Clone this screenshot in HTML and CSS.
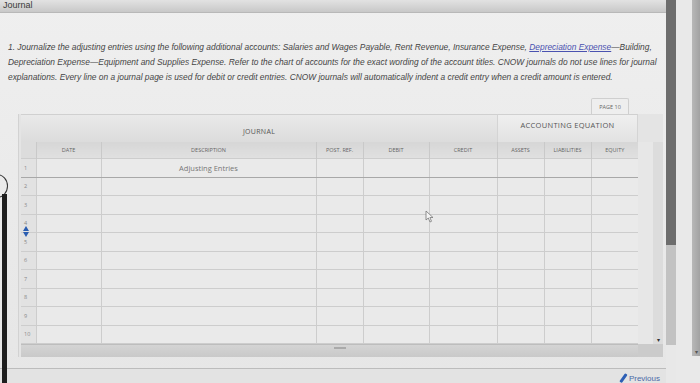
FILE: index.html
```html
<!DOCTYPE html>
<html lang="en">
<head>
  <meta charset="UTF-8">
  <meta name="viewport" content="width=device-width, initial-scale=1.0">
  <title>Journal</title>
  <link rel="stylesheet" href="styles.css">
</head>
<body>

  <div class="main">
    <!-- Title bar -->
    <div class="topbar">Journal</div>

    <!-- Instructions -->
    <p class="instructions">
      1. Journalize the adjusting entries using the following additional accounts: Salaries and Wages Payable, Rent Revenue, Insurance Expense, <a href="#">Depreciation Expense</a>—Building,<br>
      Depreciation Expense—Equipment and Supplies Expense. Refer to the chart of accounts for the exact wording of the account titles. CNOW journals do not use lines for journal<br>
      explanations. Every line on a journal page is used for debit or credit entries. CNOW journals will automatically indent a credit entry when a credit amount is entered.
    </p>

    <!-- Journal -->
    <div class="journal-area">
      <div class="page-tab">PAGE 10</div>
      <div class="journal-frame">
        <div class="journal-inner">
          <div class="title-row">
            <div class="title-journal">JOURNAL</div>
            <div class="title-equation">ACCOUNTING EQUATION</div>
          </div>
          <table class="journal">
            <colgroup>
              <col style="width:15px"><col style="width:65px"><col style="width:215px">
              <col style="width:47px"><col style="width:66px"><col style="width:68px">
              <col style="width:47px"><col style="width:47px"><col style="width:47px">
            </colgroup>
            <thead>
              <tr>
                <th class="num"></th>
                <th>DATE</th>
                <th>DESCRIPTION</th>
                <th>POST. REF.</th>
                <th>DEBIT</th>
                <th>CREDIT</th>
                <th>ASSETS</th>
                <th>LIABILITIES</th>
                <th>EQUITY</th>
              </tr>
            </thead>
            <tbody id="rows"></tbody>
          </table>
          <div class="hbar"><span class="hthumb"></span></div>
        </div>
        <div class="inner-scroll"><span class="arrow">▾</span></div>
      </div>

      <!-- overlays -->
      <div class="circle"></div>
      <div class="spinner">
        <span class="up"></span>
        <span class="down"></span>
      </div>
      <svg class="cursor" width="9" height="13" viewBox="0 0 9 13">
        <path d="M1 1 L1 10 L3.3 8 L5 12 L6.5 11.3 L4.9 7.5 L8 7.5 Z" fill="#f4f4f4" stroke="#777" stroke-width="0.8"/>
      </svg>
    </div>

    <!-- Footer -->
    <div class="footer">
      <a href="#" class="prev"><span class="pen"></span>Previous</a>
    </div>

    <div class="bezel"></div>
  </div>

  <div class="outer-scroll">
    <div class="outer-thumb"></div>
  </div>
  <div class="gutter">
    <div class="gutter-bar"><span class="arrow">▾</span></div>
  </div>

  <script>
    const body = document.getElementById("rows");
    for (let i = 1; i <= 10; i++) {
      let tr = document.createElement("tr");
      let html = '<td class="num">' + i + '</td><td></td>';
      html += '<td class="desc">' + (i === 1 ? "Adjusting Entries" : "") + '</td>';
      html += '<td></td><td></td><td></td><td></td><td></td><td></td>';
      tr.innerHTML = html;
      body.appendChild(tr);
    }
  </script>
</body>
</html>
```

FILE: styles.css
```css
html, body {
  margin: 0;
  padding: 0;
}

body {
  display: flex;
  width: 700px;
  height: 383px;
  overflow: hidden;
  background-color: #e8e8e8;
  font-family: "Liberation Sans", Arial, sans-serif;
  color: #444;
}

.main {
  position: relative;
  width: 666px;
  display: flex;
  flex-direction: column;
  background: linear-gradient(to bottom, #efefef, #e6e6e6);
}

/* Title bar */
.topbar {
  height: 12px;
  line-height: 11px;
  padding-left: 3px;
  font-size: 9px;
  color: #3a3a3a;
  background: linear-gradient(to bottom, #e2e2e2, #c8c8c8);
  border-bottom: 1px solid #b8b8b8;
}

/* Instructions */
.instructions {
  margin: 27px 0 0 8px;
  font-size: 8.4px;
  line-height: 15px;
  font-style: italic;
  white-space: nowrap;
  color: #454545;
}

.instructions a {
  color: #4a52b0;
}

/* Journal */
.journal-area {
  position: relative;
  margin-top: 13px;
  display: flex;
  flex-direction: column;
}

.page-tab {
  align-self: flex-start;
  margin-left: 591px;
  width: 36px;
  height: 15px;
  line-height: 16px;
  text-align: center;
  font-family: "Open Sans", sans-serif;
  font-size: 5.5px;
  color: #666;
  background-color: #eeeeee;
  border: 1px solid #cfcfcf;
  border-bottom: none;
  border-radius: 2px 2px 0 0;
}

.journal-frame {
  margin-left: 18px;
  width: 644px;
  display: flex;
  background-color: #e4e4e4;
  border-left: 1px solid #d2d2d2;
}

.journal-inner {
  padding-left: 2px;
  width: 617px;
  display: flex;
  flex-direction: column;
}

.title-row {
  display: flex;
  height: 28px;
  font-family: "Open Sans", sans-serif;
}

.title-journal,
.title-equation {
  display: flex;
  align-items: center;
  justify-content: center;
  background: linear-gradient(to bottom, #e9e9e9, #dcdcdc);
  border-top: 1px solid #d0d0d0;
  color: #555;
  letter-spacing: 0.3px;
}

.title-journal {
  width: 476px;
  font-size: 7px;
  padding-top: 5px;
  box-sizing: border-box;
}

.title-equation {
  width: 141px;
  font-size: 7.5px;
  border-left: 1px solid #d4d4d4;
  border-right: 1px solid #d4d4d4;
  padding-bottom: 7px;
  box-sizing: border-box;
  background: linear-gradient(to bottom, #efefef, #e2e2e2);
}

.journal {
  border-collapse: collapse;
  table-layout: fixed;
  width: 617px;
  font-family: "Open Sans", sans-serif;
}

.journal th {
  height: 16px;
  padding: 0;
  font-size: 5.5px;
  font-weight: normal;
  color: #666;
  background: linear-gradient(to bottom, #d6d6d6, #e0e0e0);
  border-left: 1px solid #c9c9c9;
}

.journal th.num {
  background: #dcdcdc;
  border-left: none;
}

.journal td {
  height: 17.5px;
  padding: 0;
  background-color: #eaeaea;
  border: 1px solid #cdcdcd;
}

.journal td.num {
  font-size: 5.5px;
  color: #888;
  padding-left: 3px;
  background-color: #e2e2e2;
  border-left: none;
}

.journal td.desc {
  text-align: center;
  font-size: 7.5px;
  color: #777;
}

.journal tbody tr:first-child td {
  border-bottom: 1px solid #a8a8a8;
}

.hbar {
  height: 12px;
  background: linear-gradient(to bottom, #d4d4d4, #c9c9c9);
  border-top: 1px solid #bdbdbd;
}

.hthumb {
  display: block;
  width: 12px;
  height: 2px;
  margin: 2px 0 0 313px;
  background-color: #aaa;
}

.inner-scroll {
  flex: 1;
  margin-top: 28px;
  display: flex;
  justify-content: flex-end;
  align-items: flex-end;
  background-color: #e7e7e7;
  border-bottom: 13px solid #cbcbcb;
}

.inner-scroll .arrow {
  width: 10px;
  height: 100%;
  background-color: #dcdcdc;
  font-size: 6px;
  line-height: 8px;
  color: #333;
  display: flex;
  align-items: flex-end;
  justify-content: center;
}

/* overlays (photo artefacts) */
.circle {
  position: absolute;
  left: -14px;
  top: 76px;
  width: 20px;
  height: 22px;
  border: 1.5px solid #333;
  border-radius: 50%;
}

.spinner {
  position: absolute;
  left: 23px;
  top: 128px;
  display: flex;
  flex-direction: column;
  gap: 1px;
}

.spinner .up {
  width: 0;
  height: 0;
  border-left: 3.5px solid transparent;
  border-right: 3.5px solid transparent;
  border-bottom: 5px solid #2a5db0;
}

.spinner .down {
  width: 0;
  height: 0;
  border-left: 3.5px solid transparent;
  border-right: 3.5px solid transparent;
  border-top: 5px solid #2a5db0;
}

.cursor {
  position: absolute;
  left: 425px;
  top: 112px;
}

.bezel {
  position: absolute;
  left: 2px;
  top: 194px;
  width: 5px;
  bottom: 0;
  background-color: #1e1e1e;
}

/* Footer */
.footer {
  flex: 1;
  margin-top: 11px;
  border-top: 1px solid #bcbcbc;
  background-color: #e3e3e3;
  display: flex;
  justify-content: flex-end;
  align-items: flex-end;
  padding-right: 6px;
  overflow: hidden;
}

.prev {
  display: flex;
  align-items: center;
  gap: 4px;
  font-size: 8px;
  color: #4a6aa8;
  text-decoration: none;
  margin-bottom: 0;
}

.pen {
  width: 2.5px;
  height: 10px;
  background-color: #2d5fb5;
  transform: rotate(35deg);
  border-radius: 1px;
}

/* Outer scroll bar */
.outer-scroll {
  width: 10px;
  height: 345px;
  background-color: #c2c2c2;
}

.outer-thumb {
  height: 245px;
  background-color: #6d6d6d;
}

.gutter {
  flex: 1;
  display: flex;
  justify-content: flex-end;
  background-color: #e9e9e9;
}

.gutter-bar {
  width: 8px;
  height: 356px;
  background: linear-gradient(to right, #b8b8b8, #a2a2a2);
  display: flex;
  align-items: flex-end;
  justify-content: center;
}

.gutter-bar .arrow {
  font-size: 6px;
  color: #555;
  line-height: 8px;
}
```
